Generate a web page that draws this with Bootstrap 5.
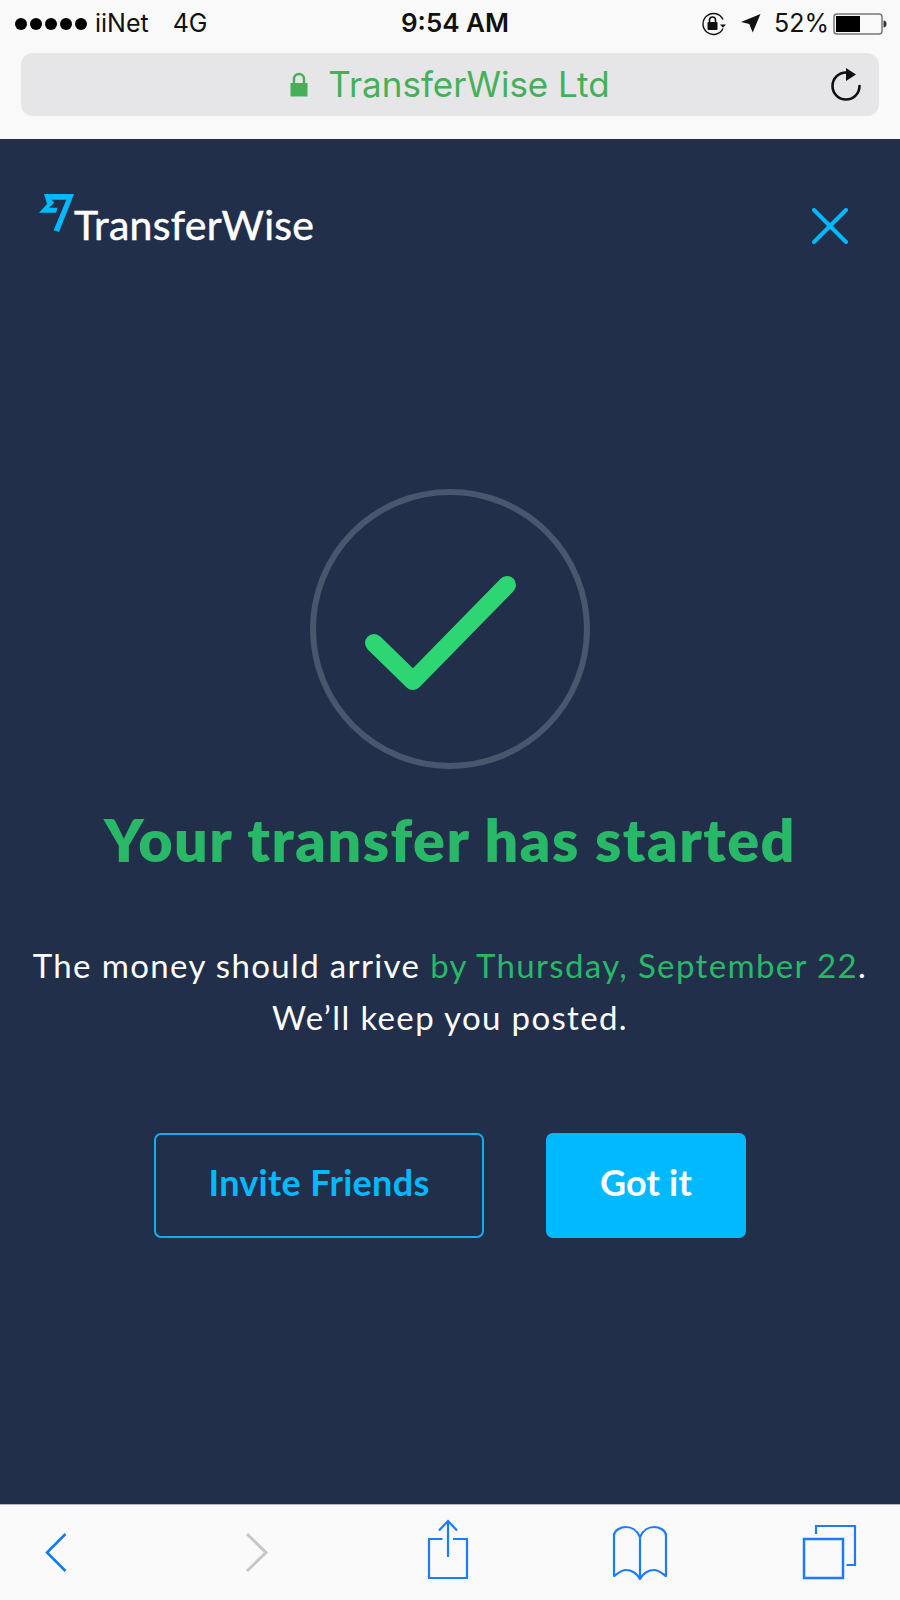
<!DOCTYPE html>
<html lang="en">
<head>
<meta charset="utf-8">
<title>TransferWise</title>
<link rel="stylesheet" href="https://cdn.jsdelivr.net/npm/bootstrap@5.3.0/dist/css/bootstrap.min.css">
<style>
html,body{height:1600px;margin:0;overflow:hidden}
body{font-family:"Lato","Liberation Sans",sans-serif;background:#222f4a}
.ios{font-family:"Inter","Liberation Sans",sans-serif}
.browser-top{height:139px;background:#f9f9f9;padding:0 21px;flex:none}
.status-line{height:53px;margin:0 -8px 0 -6px;padding-bottom:6px;color:#111;font-size:25px;position:relative}
.status-clock{font-weight:600;position:absolute;left:0;right:0;text-align:center;font-size:26px;top:3px;padding-left:8px}
.dots{gap:3px}
.dots i{display:block;width:12px;height:12px;border-radius:50%;background:#000}
.mark-lock{margin-right:14px}
.mark-arrow{margin-right:13px}
.url-pill{height:63px;background:#e6e6e8;border-radius:12px;color:#45b058;font-size:35px;position:relative}
.lock-mark{margin-right:20px}
.reload-btn{position:absolute;right:18px;top:14px}
.hero{flex:1 1 auto;background:#222f4a;padding:55px 52px 0 39px;min-height:0}
.logo-word{font-size:41px;color:#fff;font-weight:400;line-height:40px;letter-spacing:.3px;margin-left:0;margin-top:11px;-webkit-text-stroke:.5px #fff}
.logo-close{margin-top:14px}
.centre-block{margin-left:-39px;margin-right:-52px}
.tick-wrap{margin-top:244px}
.done-title{font-family:"Lato",sans-serif;font-size:59.200px;font-weight:800;color:#28b868;letter-spacing:1.5px;line-height:72px;margin:35px 0 0}
.done-copy{font-size:33px;line-height:52px;color:#fff;letter-spacing:1.36px;margin:63px 0 0}
.done-copy span{color:#28b868}
.cta-row{margin-top:90px;gap:62px}
.cta{height:105px;font-size:36px;font-weight:700;border-radius:7px;display:flex;align-items:center;justify-content:center;letter-spacing:.3px;padding:0 0 8px}
.cta-ghost{width:330px;border:2.500px solid #12aee8;color:#00b9ff;background:transparent}
.cta-solid{width:200px;border:0;color:#fff;background:#00b9ff;letter-spacing:.2px}
.browser-bottom{height:96px;background:#fafafa;border-top:1px solid #b4b8be;flex:none;position:relative}
.browser-bottom svg{position:absolute;top:0;left:0}
</style>
</head>
<body class="d-flex flex-column">
<div class="browser-top ios">
  <div class="status-line d-flex justify-content-between align-items-center">
    <div class="d-flex align-items-center">
      <div class="d-flex dots me-2"><i></i><i></i><i></i><i></i><i></i></div>
      <span>iiNet</span><span class="ms-4">4G</span>
    </div>
    <div class="status-clock">9:54 AM</div>
    <div class="d-flex align-items-center">
      <svg width="26" height="24" viewBox="0 0 26 24" class="mark-lock" fill="none" stroke="#111" stroke-width="1.4">
        <path d="M22 7.500A10.500 10.500 0 1 0 22 16.500"/>
        <path d="M19 12.500h6l-3 3.200z" fill="#111" stroke="none"/>
        <rect x="6.500" y="10" width="10" height="8" rx="1" fill="#111" stroke="none"/>
        <path d="M8.500 10V8a3 3 0 0 1 6 0v2" stroke-width="1.600"/>
      </svg>
      <svg width="20" height="19" viewBox="0 0 20 19" class="mark-arrow"><path d="M19.500 0 0 8l8.300 2 3.400 8.500z" fill="#111"/></svg>
      <span>52%</span>
      <svg width="54" height="24" viewBox="0 0 54 24" class="ms-1">
        <rect x="1" y="2" width="48" height="20" rx="3" fill="none" stroke="#777" stroke-width="1.500"/>
        <rect x="3" y="4" width="24" height="16" fill="#000"/>
        <path d="M50.500 8.500c2 0 3 1.500 3 3.500s-1 3.500-3 3.500z" fill="#333"/>
      </svg>
    </div>
  </div>
  <div class="url-pill d-flex align-items-center justify-content-center">
    <svg width="18" height="25" viewBox="0 0 18 25" class="lock-mark"><path d="M4 12V7a5 5 0 0 1 10 0v5" fill="none" stroke="#45b058" stroke-width="2.400"/><rect x="0.500" y="11" width="17" height="13.500" fill="#45b058"/></svg>
    <span>TransferWise Ltd</span>
    <svg class="reload-btn" width="30" height="34" viewBox="0 0 30 34" fill="none"><path d="M15 5.500A13.500 13.500 0 1 0 28.500 19" stroke="#111" stroke-width="2.600" stroke-linecap="round"/><path d="M15 1l10 6.500L15 14z" fill="#111"/></svg>
  </div>
</div>

<main class="hero d-flex flex-column">
  <div class="d-flex justify-content-between align-items-start">
    <div class="d-flex align-items-start">
      <svg width="35" height="38" viewBox="28 28 105 114"><path d="M43 28H133L88 142 72 137 110 45H65L74 54 58 69H84L79 84H28L52 58z" fill="#00b9ff"/></svg>
      <div class="logo-word">TransferWise</div>
    </div>
    <svg width="36" height="36" viewBox="0 0 36 36" class="logo-close"><path d="M2 2 34 34M34 2 2 34" stroke="#00b9ff" stroke-width="4" stroke-linecap="round"/></svg>
  </div>
  <div class="text-center centre-block">
    <div class="tick-wrap">
      <svg width="280" height="280" viewBox="0 0 280 280">
        <circle cx="140" cy="140" r="137" fill="none" stroke="#4a566e" stroke-width="6"/>
        <path d="M64 154l39 38 94-96" fill="none" stroke="#2ed573" stroke-width="18" stroke-linecap="round" stroke-linejoin="round"/>
      </svg>
    </div>
    <h1 class="done-title">Your transfer has started</h1>
    <p class="done-copy">The money should arrive <span>by Thursday, September 22</span>.<br>We’ll keep you posted.</p>
    <div class="cta-row d-flex justify-content-center">
      <button class="btn cta cta-ghost" type="button">Invite Friends</button>
      <button class="btn cta cta-solid" type="button">Got it</button>
    </div>
  </div>
</main>

<footer class="browser-bottom">
  <svg width="900" height="95" viewBox="0 0 900 95" fill="none">
    <path d="M65.500 29 47 47.500 65.500 66" stroke="#0a7aff" stroke-width="2.500"/>
    <path d="M247 29 266 47.500 247 66" stroke="#c7c7c7" stroke-width="3"/>
    <g stroke="#1c7cff" stroke-width="2.200">
      <path d="M442.500 34H429V73H467V34H453"/>
      <path d="M448 52V16M439 25.500 448 16 457 25.500"/>
      <path d="M640 71V32c-3-7-9-10-14-10s-12 3-12 9v40c3-2 7-6 12-6s11 3 14 9c3-6 9-9 14-9s9 4 12 6V31c0-6-7-9-12-9s-11 3-14 10z" stroke-linejoin="round"/>
      <path d="M816 29V21H855V60H846.500"/>
      <rect x="804" y="34" width="39" height="39" stroke-width="2.500"/>
    </g>
  </svg>
</footer>
<script src="https://cdn.jsdelivr.net/npm/bootstrap@5.3.0/dist/js/bootstrap.bundle.min.js"></script>
</body>
</html>
